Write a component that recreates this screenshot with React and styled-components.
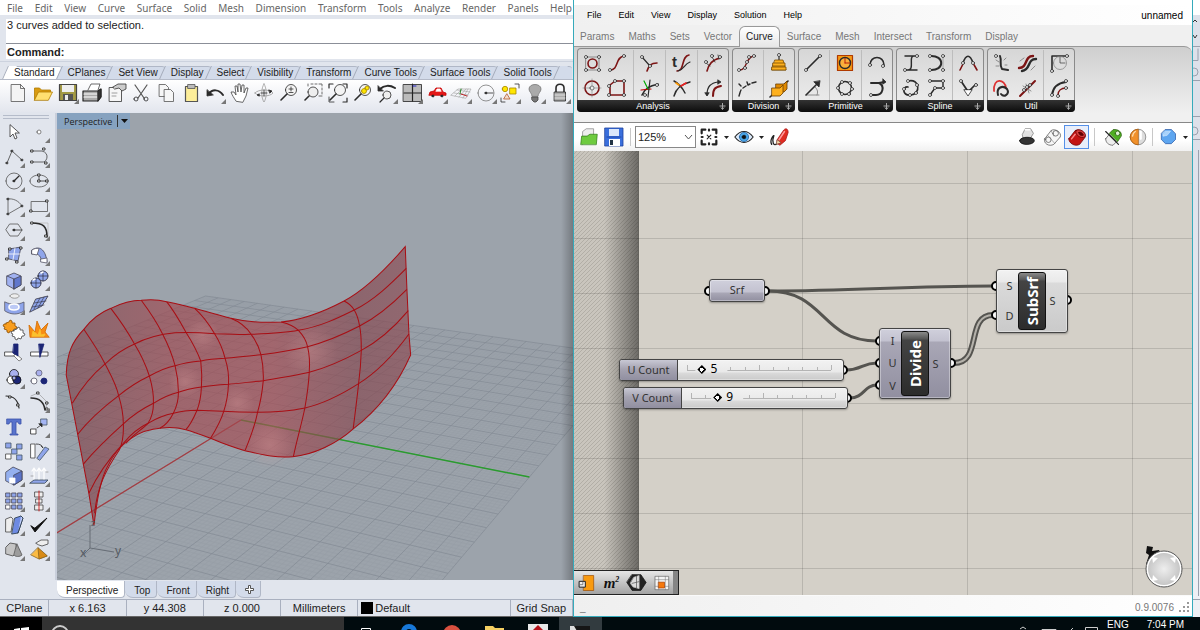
import React, { useState } from 'react'
import styled, { createGlobalStyle, css } from 'styled-components'

const GlobalStyle = createGlobalStyle`
    * { box-sizing: border-box; }
    body {
        margin: 0;
        font-family: "Liberation Sans", Arial, sans-serif;
        font-size: 10px;
        color: #222;
    }
    button {
        border: none;
        background: none;
        padding: 0;
        margin: 0;
        font: inherit;
        color: inherit;
    }
`

const Screen = styled.div`
    height: 100vh;
    display: flex;
    flex-direction: column;
    overflow: hidden;
    background: #e1e5ed;
`
const Desktop = styled.div`
    flex: 1;
    min-height: 0;
    display: grid;
    grid-template-columns: minmax(0, 573fr) minmax(0, 620fr) 7px;
`

/* ---------- Rhino ---------- */

const Rhino = styled.section`
    display: flex;
    flex-direction: column;
    min-width: 0;
    overflow: hidden;
    background: #e1e5ed;
`
const RhinoMenu = styled.nav`
    display: flex;
    flex: none;
    justify-content: space-between;
    height: 15px;
    padding: 0 1px 0 7px;
    background: white;
    font-family: "Noto Sans", sans-serif;
    color: #666;
    white-space: nowrap;
    line-height: 14px;
`
const CommandArea = styled.div`
    flex: none;
    height: 47px;
    padding: 4px 0 3px 6px;
    border-bottom: 1px solid #ccd2de;
    font-size: 11px;
`
const History = styled.div`
    height: 25px;
    padding: 0 1px;
    line-height: 12px;
    background: white;
    border-bottom: 1px solid #8b8f98;
`
const CommandLine = styled.label`
    display: flex;
    align-items: center;
    height: 15px;
    padding-left: 1px;
    line-height: 14px;
    background: white;
    font-weight: bold;
`
const CommandInput = styled.input`
    flex: 1;
    border: none;
    outline: none;
    padding: 0 4px;
    height: 14px;
    background: none;
`
const TabStrip = styled.div`
    display: flex;
    flex: none;
    height: 15px;
    margin-top: 3px;
    padding-left: 8px;
    align-items: flex-end;
    overflow: hidden;
    border-bottom: 1px solid #b4bac8;
`
const ToolTab = styled.button`
    position: relative;
    z-index: 0;
    height: 13px;
    padding: 0 7px 0 6px;
    white-space: nowrap;
    line-height: 12px;
    color: #222;
    background: ${props => props.$active ? 'white' : '#d3dbea'};
    border-top: 1px solid #b0b7c6;
    border-top-right-radius: 3px;
    &::before {
        content: '';
        position: absolute;
        z-index: -1;
        left: -3px;
        top: -1px;
        bottom: 0;
        width: 8px;
        background: inherit;
        border-left: 1px solid #a4abba;
        transform: skewX(-24deg);
    }
`
const StandardBar = styled.div`
    display: grid;
    grid-template-columns: repeat(23, minmax(0, 1fr));
    align-items: center;
    flex: none;
    height: 33px;
    padding: 0 1px 6px 6px;
    background: linear-gradient(white, #e3e6ee);
    border-bottom: 1px solid #e1e5ed;
`
const IconButton = styled.button`
    display: flex;
    align-items: center;
    justify-content: center;
    min-width: 0;
    svg { flex: none; }
`
const RhinoBody = styled.div`
    display: flex;
    flex: 1;
    min-height: 0;
`
const Palette = styled.div`
    flex: none;
    width: 57px;
    padding: 2px 6px 0 1px;
    border-right: 2px solid #c9cfdb;
`
const Gripper = styled.div`
    height: 4px;
    margin: 0 0 1px 2px;
    border-top: 1px solid #b5bcca;
    border-bottom: 1px solid #b5bcca;
`
const PaletteGrid = styled.div`
    display: grid;
    grid-template-columns: 25px 25px;
    grid-template-rows: repeat(18, 1fr);
    height: 442px;
`
const Viewport = styled.div`
    position: relative;
    flex: 1;
    min-width: 0;
    background: #9ca3ab;
    overflow: hidden;
    svg.scene { display: block; width: 100%; height: 100%; }
`
const ViewportTitle = styled.button`
    position: absolute;
    left: 0;
    top: 0;
    display: flex;
    align-items: center;
    gap: 5px;
    height: 16px;
    padding-left: 7px;
    width: 73px;
    background: #86a2bf;
    font-family: "Open Sans", sans-serif;
    font-size: 9px;
    svg { border-left: 1px solid #333; }
`
const ViewTabs = styled.div`
    display: flex;
    flex: none;
    height: 20px;
    padding: 1px 0 0 57px;
    border-bottom: 1px solid #a9b0bf;
`
const ViewTab = styled.button`
    height: 17px;
    padding: 2px 6px 0 9px;
    background: ${props => props.$active ? 'white' : '#d3dbea'};
    border-right: 1px solid #b0b7c6;
    border-bottom: 1px solid #b0b7c6;
    border-radius: 0 0 4px 8px;
`
const StatusBar = styled.div`
    display: flex;
    flex: none;
    height: 17px;
    font-size: 11px;
    line-height: 17px;
    white-space: nowrap;
    border-bottom: 1px solid #666;
`
const StatusCell = styled.div`
    flex: ${props => props.$grow || 77} 1 0;
    min-width: 0;
    display: flex;
    align-items: center;
    gap: 2px;
    justify-content: ${props => props.$left ? 'flex-start' : 'center'};
    padding-left: ${props => props.$left ? '3px' : 0};
    border-right: 1px solid #a9b0bf;
    overflow: hidden;
`
const LayerSwatch = styled.span`
    width: 12px;
    height: 12px;
    background: black;
`

/* ---------- Grasshopper ---------- */

const Grasshopper = styled.section`
    display: flex;
    flex-direction: column;
    min-width: 0;
    border: 1px solid #35aabb;
    border-top: none;
    background: #f0f0f0;
`
const GhMenu = styled.nav`
    display: flex;
    flex: none;
    gap: 17px;
    align-items: center;
    height: 26px;
    padding: 5px 9px 0 13px;
    border-bottom: 1px solid #f0f0f0;
    background: linear-gradient(90deg, #f0f0f0, white) 0 5px no-repeat, white;
    font-size: 9px;
    color: black;
`
const DocumentName = styled.span`
    margin-left: auto;
    font-size: 10px;
`
const GhTabs = styled.div`
    display: flex;
    flex: none;
    height: 21px;
    padding-left: 6px;
    gap: 14px;
    line-height: 20px;
    color: #777;
    position: relative;
    z-index: 1;
`
const GhTab = styled.button`
    height: 21px;
    ${props => props.$active && css`
        margin: 0 -7px;
        padding: 0 6px 3px;
        color: #222;
        background: linear-gradient(white, #e6e6e6);
        border: 1px solid #999;
        border-bottom: none;
        border-radius: 6px 6px 0 0;
    `}
`
const Ribbon = styled.div`
    display: flex;
    flex: none;
    gap: 3px;
    height: 77px;
    margin-top: -1px;
    padding: 1px 3px 11px;
    background: linear-gradient(#cfcfcf, #f0f0f0 88%);
    border-top: 1px solid #999;
    border-bottom: 1px solid #888;
    border-top-right-radius: 8px;
`
const RibbonPanel = styled.div`
    display: flex;
    flex-direction: column;
    height: 64px;
    border-radius: 4px;
    overflow: hidden;
    background: linear-gradient(#d6d6d6, #efefef);
    box-shadow: inset 0 0 0 1px #8a8a8a;
`
const RibbonGroups = styled.div`
    display: flex;
    flex: 1;
    padding-top: 2px;
`
const RibbonGroup = styled.div`
    display: grid;
    grid-template-columns: repeat(${props => props.$cols}, 25px);
    grid-auto-rows: 25px;
    padding: 0 4px 0 2px;
    & + & { border-left: 1px solid #bdbdbd; }
`
const RibbonTitle = styled.button`
    display: grid;
    grid-template-columns: 10px 1fr 10px;
    height: 12px;
    line-height: 12px;
    font-size: 9px;
    color: white;
    background: linear-gradient(#333, #0c0c0c);
`
const GhToolbar = styled.div`
    display: flex;
    flex: none;
    align-items: center;
    height: 28px;
    padding: 0 2px;
    background: linear-gradient(white 60%, #f1f1f1);
`
const ToolButton = styled.button`
    display: flex;
    align-items: center;
    justify-content: center;
    width: ${props => props.$narrow ? '10px' : '25px'};
    height: 24px;
    border: 1px solid ${props => props.$active ? '#5590e8' : 'transparent'};
    background: ${props => props.$active ? '#e8eefa' : 'none'};
    svg { flex: none; }
`
const Divider = styled.span`
    width: 1px;
    height: 18px;
    margin: 0 ${props => props.$gap}px;
    background: #c8c8c8;
`
const ZoomBox = styled.span`
    position: relative;
    display: flex;
    width: 61px;
    height: 22px;
    svg { position: absolute; right: 3px; top: 8px; pointer-events: none; }
`
const ZoomSelect = styled.select`
    appearance: none;
    width: 100%;
    padding: 0 2px;
    border: 1px solid #888;
    border-radius: 0;
    background: white;
    color: #222;
    font-size: 11px;
`
const Spacer = styled.span`
    flex: 1;
`
const Canvas = styled.div`
    position: relative;
    flex: 1;
    min-height: 0;
    overflow: hidden;
    background: #d4d0c8;
`
const Wires = styled.svg`
    position: absolute;
    inset: 0;
`
const NodeBox = styled.div`
    position: absolute;
    left: ${props => props.$x}px;
    top: ${props => props.$y}px;
    width: ${props => props.$w}px;
    height: ${props => props.$h}px;
    display: flex;
    align-items: stretch;
    border: 1px solid #444;
    border-radius: 3px;
    box-shadow: inset 0 0 0 1px rgba(255, 255, 255, .35), 0 1px 2px rgba(0, 0, 0, .3);
    font-family: "Noto Sans", sans-serif;
    font-size: 11px;
    color: #333;
    background: ${props => props.$selected
        ? 'linear-gradient(#d0d0dc 0, #c3c2d0 12px, #a9a7b6 13px, #918fa0)'
        : 'linear-gradient(#f2f2f2 0, #e9e9e9 12px, #dadada 13px, #cacaca)'};
`
const NodeName = styled.span`
    flex: 1;
    text-align: center;
    line-height: 19px;
`
const Params = styled.div`
    flex: none;
    width: 21px;
    display: flex;
    flex-direction: column;
    justify-content: space-around;
    padding: ${props => props.$out ? '0 8px 0 0' : '1px 0 1px 4px'};
    line-height: 14px;
    text-align: center;
`
const NodeTitle = styled.div`
    display: flex;
    align-items: center;
    justify-content: center;
    width: 28px;
    margin: 2px 0;
    border: 1px solid #111;
    border-radius: 3px;
    background: linear-gradient(#8a8a8a, #555 7px, #444 8px, #2c2c2c);
    color: white;
    font-weight: bold;
    font-size: 15px;
    writing-mode: vertical-rl;
    line-height: 18px;
    span { transform: rotate(180deg); }
`
const SliderLabel = styled.label`
    width: 58px;
    line-height: 19px;
    text-align: center;
    border-right: 1px solid #444;
    border-radius: 2px 0 0 2px;
    background: linear-gradient(#c8c8d4, #a5a3b1 45%, #918fa0);
`
const Rail = styled.div`
    position: relative;
    flex: 1;
    padding-left: 9px;
    svg { display: block; }
`
const Range = styled.input`
    appearance: none;
    position: absolute;
    left: 5px;
    top: 5px;
    width: 153px;
    height: 9px;
    margin: 0;
    background: none;
    &::-webkit-slider-thumb {
        appearance: none;
        width: 9px;
        height: 9px;
        background: radial-gradient(circle, white 2px, black 2px);
        clip-path: polygon(50% 0, 100% 50%, 50% 100%, 0 50%);
    }
`
const SliderValue = styled.output`
    position: absolute;
    top: 0;
    line-height: 18px;
    font-size: 12px;
    color: black;
`
const CanvasWidgets = styled.div`
    position: absolute;
    left: 0;
    bottom: 0;
    display: flex;
    align-items: center;
    width: 105px;
    height: 25px;
    border: 1px solid #222;
    border-left: none;
    background: linear-gradient(#e6e6e6, #a3a3a3);
    box-shadow: inset -5px 0 0 #858585;
`
const SquareMetre = styled.span`
    font: italic bold 15px/20px "Liberation Serif", serif;
    color: #111;
    sup { font-size: 8px; line-height: 0; }
`
const Compass = styled.svg`
    position: absolute;
    right: 6px;
    bottom: 1px;
`
const GhStatus = styled.footer`
    display: flex;
    flex: none;
    align-items: center;
    gap: 4px;
    height: 21px;
    padding: 2px 2px 0 6px;
    border-top: 1px solid #fafafa;
    background: linear-gradient(90deg, #efefef, white);
    color: #777;
`

/* ---------- right panel edge and taskbar ---------- */

const PanelEdge = styled.aside`
    overflow: hidden;
    background: linear-gradient(#fff 15px, #dde1ea 15px, #dde1ea 130px, #eef0f5 600px);
    svg { display: block; }
`
const Taskbar = styled.footer`
    display: flex;
    flex: none;
    height: 13px;
    overflow: hidden;
    background: #010b0e;
    color: white;
    svg { flex: none; }
`
const StartButton = styled.button`
    flex: none;
    width: 42px;
    background: black;
`
const Search = styled.button`
    flex: none;
    width: 302px;
    text-align: left;
    background: #333;
`
const Task = styled.button`
    flex: none;
    width: 43px;
    height: 13px;
    background: ${props => props.$active ? '#323b3f' : 'none'};
`
const Tray = styled.div`
    display: flex;
    gap: 18px;
    padding: 3px 16px 0 0;
    line-height: 10px;
`

/* ---------- drawings ---------- */

const K = '#2b2b2b'
const R = '#7d1515'
const B = '#8fa5ea'
const N = '#1b2575'

// an icon is a list of [path, stroke, fill, width] plus round and square handles
const Glyph = ({ icon, size = 24 }) => (
    <svg width={size} height={size} viewBox="0 0 24 24" strokeLinecap="round" strokeLinejoin="round">
        {icon.p.map(([d, stroke = K, fill = 'none', width = 1], i) => (
            <path key={i} d={d} stroke={stroke} fill={fill} strokeWidth={width * 0.8} />
        ))}
        {icon.t && <text x="3" y="16" fontSize="15" fontWeight="bold" fontFamily="Liberation Sans" fill={K}>{icon.t}</text>}
        {(icon.dots || []).map(([x, y], i) => (
            <circle key={i} cx={x} cy={y} r="1.500" fill="white" stroke={K} strokeWidth=".8" />
        ))}
        {(icon.sq || []).map(([x, y], i) => (
            <path key={i} d={`M${x - 1} ${y - 1}h2v2h-2z`} fill="white" stroke={K} strokeWidth=".9" />
        ))}
        {icon.flag && <path d="M23 18v5h-5z" fill="#777" />}
    </svg>
)

const ring = (x, y, r) => `M${x - r} ${y}a${r} ${r} 0 1 0 ${2 * r} 0a${r} ${r} 0 1 0 ${-2 * r} 0z`
const box = (x, y, w, h) => `M${x} ${y}h${w}v${h}h${-w}z`
const magnifier = [[ring(14, 9, 5.5), K, '#f4f4f4'], ['M10 13l-6 6', K, 'none', 2]]

const standardIcons = [
    ['New', { p: [['M5.5 3.5h9l4 4v13h-13z', '#555', '#f4f4f4'], ['M14.5 3.5v4h4', '#555']] }],
    ['Open', { p: [['M3.5 19v-12h5l2 2h9v3', '#b07b00', '#d99b10'], ['M3.5 19l4-8h14l-4 8z', '#b07b00', '#ffe070']] }],
    ['Save', { p: [[box(3.5, 3.5, 17, 16), '#444', '#a39a45', 1.5], [box(6, 4, 12, 7), 'none', '#eee'], [box(7, 13, 10, 6), 'none', '#555'], [box(9, 14, 3, 5), 'none', '#eee']], flag: true }],
    ['Print', { p: [['M8 9l3-6h9l-2 6', '#444', '#fff'], ['M3 10h15l3-2v8l-3 4H3z', '#222', '#aaa', 1.5], ['M4 13h13M4 16h13', '#fff', 'none', 1.5], ['M18 10l3-2v8l-3 4z', '#222', '#333']] }],
    ['Properties', { p: [['M4.5 6.5h12v14h-12z', '#333', '#f6f6f6'], ['M8 6l5-3h8v5l-4 2-3-3-4 1z', '#333', '#ccc'], ['M7 12h5M7 15h4', '#888']] }],
    ['Cut', { p: [['M6 4l9 13M18 4l-9 13', '#555', 'none', 1.5], [ring(7, 18, 2), K], [ring(17, 18, 2), K]] }],
    ['Copy', { p: [['M5.5 3.5h6l3 3v9h-9z', '#555', '#f6f6f6'], ['M10.5 8.5h6l3 3v9h-9z', '#555', '#f6f6f6']] }],
    ['Paste', { p: [['M6.500 5.500h12v15h-12z', '#555', '#fdee9a', 1.5], ['M9 3.500h7v4h-7z', '#555', '#bbb']] }],
    ['Undo', { p: [['M6 13c3-5 10-5 14 1', K, 'none', 2.5], ['M4 9v6l6-1z', K, K]], flag: true }],
    ['Pan', { p: [['M8 20c-2-3-4-6-5-9l3 0 2 3-1-9 2 0 1 6 0-8 2 0 1 8 1-7 2 0 0 8 2-5 2 0-2 8-3 6z', '#444', '#fff']] }],
    ['Rotate view', { p: [['M3 12c3-4 15-4 18 0c-3 4-15 4-18 0z', '#999'], ['M12 3c-3 4-3 14 0 18c3-4 3-14 0-18z', '#999'], ['M9 12h6M12 9v6', K], ['M7 13l-2 1 2 1zM17 9l3 1-2 2z', K, K]] }],
    ['Zoom dynamic', { p: [...magnifier, ['M14 6v4M12 8h4M12 11.500h4', K]] }],
    ['Zoom window', { p: [['M9 3h2M13 3h2M17 3h3v2M20 7v2M20 11v2M20 15h-3M6 3v2', '#666', 'none', 1.2], [ring(11, 11, 5), K, '#eee'], ['M7 15l-4 4', K, 'none', 2]] }],
    ['Zoom extents', { p: [...magnifier, ['M3 7V3h4M17 3h4v4M21 17v4h-4', K, 'none', 1.5], ['M3 16v5h5', K]] }],
    ['Zoom selected', { p: [...magnifier, [ring(13, 10, 2.5), '#a68500', '#ffe600'], [ring(16, 7, 2), '#a68500', '#ffe600']] }],
    ['Undo view', { p: [['M5 8c4-4 10-4 15-1', K, 'none', 2.5], ['M3 5v5l5 0z', K, K], [ring(12, 14, 4), K, '#eee'], ['M9 17l-4 4', K, 'none', 1.5]], flag: true }],
    ['Four views', { p: [[box(3.5, 3.5, 18, 17), '#222', '#bbb'], ['M12.5 3v17M4 12h17', '#222', 'none', 1.5], ['M13 5h3', '#00c']], flag: true }],
    ['Display', { p: [['M4 14l1-3 4-1 2-3h5l2 4 3 1v2z', '#c50000', '#e41818'], ['M11 10l1-2h3l1 2z', '#fff', '#fff'], [ring(8, 15, 1), '#111', '#555'], [ring(17, 15, 1), '#111', '#555']], flag: true }],
    ['CPlane', { p: [['M2 14l7-6h13l-5 9zM6 15l7-7M10 16l7-8M14 17l5-9M5 12l14 2M8 9l13 2', '#999', 'none', .7], ['M12 8l-1 5', '#070'], ['M12 13l6 2', '#b00']], flag: true }],
    ['Osnap', { p: [[ring(12, 12, 8), '#777'], ['M12 12h7', K], [ring(12, 12, 1), K, K]], flag: true }],
    ['Select', { p: [['M17 3h4v4M3 17v4h4', K], [ring(7, 8, 2.7), '#a68500', '#ffe600'], [box(12, 7, 6, 6), '#a68500', '#ffe600'], ['M9 13l3 5H6z', '#b2582a', '#f2dccc']], flag: true }],
    ['Hide', { p: [['M9 15c0-3-3-4-3-7c0-6 12-6 12 0c0 3-3 4-3 7z', '#777', '#aaa'], ['M9 16h6v3l-2 2h-2l-2-2z', '#444', '#777']], flag: true }],
    ['Lock', { p: [['M8 11V7c0-5 8-5 8 0v4', K, 'none', 2], [box(6.5, 11, 11, 9), '#222', '#aaa'], ['M7 14h10M7 17h10', '#eee']], flag: true }],
]

const puzzle = (x, y, c, f) => [`M${x} ${y}l3-1 1-2 2 1 0 2 3 0 0 3 2 1-1 2-2 0-1 3-3-1-1 2-2-1 0-2-3-1 1-2-2-1 1-2 2 0z`, c, f]
const paletteIcons = [
    ['Select', { p: [['M8 5v12l3-3 2 5 2-1-2-5h4z', '#333', '#fff']] }],
    ['Point', { p: [[ring(12, 12, 2), '#666', '#fff']], flag: true }],
    ['Polyline', { p: [['M5 18l5-12 10 9', '#444'], [ring(5, 18, 1), K, '#777'], [ring(10, 6, 1), K, '#777'], [ring(20, 15, 1), K, '#777']], flag: true }],
    ['Curve', { p: [['M5 6h10c8 2 5 11 1 11H5', '#444']], sq: [[5, 6], [17, 4], [5, 17], [19, 18]], flag: true }],
    ['Circle', { p: [[ring(12, 12, 8), '#555'], ['M12 12l5-5', K, 'none', 1.5], [ring(12, 12, 1), K, K]], flag: true }],
    ['Ellipse', { p: [['M3 12c0-8 18-8 18 0c0 8-18 8-18 0z', '#555'], ['M12 12V7M12 12h7', K]], sq: [[12, 12], [12, 6], [20, 12]], flag: true }],
    ['Arc', { p: [['M6 5v15l14-8c-3-5-9-8-14-7', '#555'], [ring(6, 5, 1), K, '#777'], [ring(6, 20, 1), K, '#777'], [ring(20, 12, 1), K, '#777']], flag: true }],
    ['Rectangle', { p: [[box(4.5, 7.5, 16, 10), '#555']], sq: [[4, 17], [20, 7]], flag: true }],
    ['Polygon', { p: [['M8 6h8l4 6-4 6H8l-4-6z', '#555'], ['M12 12h8', K], [ring(12, 12, 1), K, K]], flag: true }],
    ['Fillet', { p: [['M5 5h16v14', '#bbb'], ['M5 5c11 0 15 3 15 14', K, 'none', 2]], sq: [[5, 5], [19, 18]], flag: true }],
    ['Surface from points', { p: [['M7 6l12-2-3 14-9-2z', '#445', B], ['M13 5l-2 12M6 11l12 0', '#fff']], sq: [[8, 6], [19, 5], [5, 16], [15, 19]], flag: true }],
    ['Sweep', { p: [['M5 7c9-6 14 2 15 12l-6-2c0-4-3-7-9-6z', '#445', B], ['M5 7c3-2 5-2 7-1l-2 6-5-1zM14 16l6-1 0 5-6-1z', '#556', '#fff']], flag: true }],
    ['Box', { p: [['M5 8l7-3 7 3v9l-7 4-7-4z', '#445', '#a0b1f0'], ['M12 11l7-3v9l-7 4z', '#445', '#6077cc'], ['M5 8l7 3v10', '#445']], flag: true }],
    ['Spheres', { p: [[ring(16, 8, 5), '#223', B], [ring(9, 15, 5), '#223', B], ['M4 15h10M9 10v10M11 8h10M16 3v10', '#223', 'none', .8], ['M6 12l2-1M14 5l2-1', '#fff', 'none', 2]], flag: true }],
    ['Project', { p: [['M8 4c0-3 9-3 9 0s-9 3-9 0z', '#888', '#eee'], ['M3 10c6 3 13 3 19 0v9c-6 4-13 4-19 0z', '#556', B], ['M7 15c0-4 10-4 10 0s-10 4-10 0z', '#fff', '#bcc9f5', 2]], flag: true }],
    ['Mesh', { p: [['M9 7l12-3-6 10-12 6z', '#334', B], ['M13 6l-6 11M17 5l-6 11M7 11l12-2M5 15l12-2', '#334', 'none', .8]], flag: true }],
    ['Join', { p: [puzzle(4, 6, '#8a4c00', '#f99e1e'), puzzle(12, 13, '#444', '#fff')] }],
    ['Explode', { p: [['M3 20l-1-12 6 7 2-11 4 9 7-7-3 9 4 5z', '#d06a00', '#f78c14'], ['M5 19l1-5 5 4 2-6 1 6 4-1-1 2z', '#fbc22e', '#fbc22e']] }],
    ['Trim', { p: [['M3 11h8l3 4-11 0z', '#333', '#fff'], ['M14 13l6 5-3 2-5-5z', '#666', '#fff'], ['M12 3h4v12l-5-3z', N, N]] }],
    ['Split', { p: [['M4 11h17v4H4z', '#333', '#fff'], ['M12 3h5l-4 13z', N, N]] }],
    ['Boolean', { p: [[ring(12, 8, 4.5), '#111', '#a9b0ee'], [ring(9, 14, 4), '#111', '#fff'], [ring(15, 14, 4), '#111', N], [ring(12, 12, 2), '#111', '#a9b0ee']], flag: true }],
    ['Group', { p: [[ring(12, 7, 3), '#667', '#a9b0ee'], [ring(7, 15, 3), '#556', '#fff'], [ring(17, 15, 3), N, N]] }],
    ['Edit points', { p: [['M4 6c8 0 12 4 13 12', K, 'none', 1.5]], sq: [[8, 7], [16, 15]] }],
    ['Control points', { p: [['M4 8c8 0 13 4 14 12', K, 'none', 2], ['M4 6l7-3 9 9-1 7', '#888', 'none', .7]], sq: [[11, 3], [20, 13], [20, 19]], flag: true }],
    ['Text', { p: [['M5 4h14v5h-2l-1-2h-2v12l2 0v1H8v-1l2 0V7H8L7 9H5z', '#3a52a8', '#5873cc']] }],
    ['Move', { p: [[box(4, 14, 5, 5), K, '#fff'], [box(14, 4, 6, 6), '#456', '#a4b5f3'], ['M10 13l4-3', K], ['M15 9v3l-3-3z', K, K]], flag: true }],
    ['Copy', { p: [[box(4, 4, 5, 5), '#456', B], [box(10, 10, 5, 5), '#456', B], [box(15, 5, 5, 5), '#456', B], [box(4, 15, 5, 5), '#444', '#fff'], [box(15, 16, 5, 5), '#456', B]] }],
    ['Rotate', { p: [[box(4, 5, 4, 14), '#444', '#fff'], ['M10 19l8-11 4 2-9 11z', '#456', B], ['M9 5c4 0 6 1 7 4l-2-2', K]] }],
    ['Scale', { p: [['M4 8l7-5 9 4v9l-8 5-8-4z', '#445', '#94b0ef'], ['M12 11l8-4v9l-8 5z', '#445', '#5a73c8'], [box(8, 14, 5, 5), '#fff', '#fff']], flag: true }],
    ['Extrude', { p: [['M3 19l4-3h14l-3 3z', '#345', B], ['M7 15V5M12 15V5M17 15V5M5 7l2-3 2 3M10 7l2-3 2 3M15 7l2-3 2 3', '#fff', 'none', 1.5], ['M4 12h2M19 8h2', '#999']], flag: true }],
    ['Array', { p: [...[4, 10, 16].flatMap(x => [4, 10, 16].map(y => [box(x, y, 4, 4), '#445', y === 16 && x === 4 ? '#fff' : B]))], flag: true }],
    ['Align', { p: [[box(8, 3, 8, 5), '#444', '#eee'], [box(9, 10, 6, 4), '#444', '#eee'], [box(8, 16, 8, 5), '#444', '#eee'], ['M12 2v20', '#c00']], flag: true }],
    ['Mirror', { p: [['M4 6l5-2 2 2-2 13-5 0z', '#444', '#eee'], ['M13 5l6-2 2 2-5 15-6 1z', '#234', '#6d8ae2'], ['M19 3l2 2-5 15', '#234', '#bfcdfa']], flag: true }],
    ['Check', { p: [['M4 13l4 6L20 5 8 15z', '#111', '#111', 1.2]], flag: true }],
    ['Solid tools', { p: [['M4 9l4-4 6 1 1 8-4 4-7-2z', '#444', '#c4c4c4'], ['M15 6l5 11c-2 2-7 2-8 0z', '#555', '#9c9c9c']], flag: true }],
    ['Analyse', { p: [['M11 10l9 8-8 3-8-4z', '#8b6620', '#fbbb43'], ['M11 10l1 11 8-3z', '#8b6620', '#d98a14'], ['M9 5l5-3h7v4l-6 2-3-1z', '#444', '#eee']], flag: true }],
]

const ribbonPanels = [
    { title: 'Analysis', groups: [
        [
            { p: [[box(6, 6, 13, 13), '#777'], [ring(12.5, 12.5, 4.5), R, 'none', 2]], dots: [[6, 6], [19, 6], [6, 19], [19, 19]] },
            { p: [['M5 19c9 0 5-13 14-14', R, 'none', 2]], dots: [[5, 19], [19, 5]] },
            { p: [[ring(12, 12, 7), R, 'none', 2], ['M3 12h18M12 3v18', '#777', 'none', .7], [ring(12, 12, 2), K, '#eee', .7]] },
            { p: [['M5 9l5-4h9v14H5z', R, 'none', 2]], dots: [[4, 10], [10, 5], [19, 5], [4, 19], [19, 19]] },
        ],
        [
            { p: [['M5 6l8 9', K, 'none', 1.5], ['M10 20c2-6 4-8 10-8', R, 'none', 2]], dots: [[5, 6], [13, 15]] },
            { p: [['M5 19c3-7 8-9 16-11', K, 'none', 2], ['M4 14l10-1', '#b00', 'none', 1.5], ['M7 5l4 8', '#0a0', 'none', 1.5], ['M13 4l-2 17', K, 'none', 1.500]], dots: [[8, 19], [20, 9]] },
        ],
        [
            { p: [['M8 20c8 0 4-15 12-16', R, 'none', 2], ['M9 20c6-1 6-7 12-9', K, 'none', 1.5]], t: 't' },
            { p: [['M5 20c2-7 7-12 16-14', K, 'none', 1.8], ['M5 5c4 2 8 6 11 12', K, 'none', 1.8], ['M12 10l5-3', '#e22', 'none', 2], ['M7 7l3 2', '#f90', 'none', 2]] },
        ],
        [
            { p: [['M6 20c2-7 5-11 13-13', R, 'none', 2], ['M5 12l4 3M11 6l3 5M17 4l1 4', K]], dots: [[5, 11], [11, 5], [19, 6]] },
            { p: [['M12 20c0-7 2-9 8-10', R, 'none', 2.5], ['M6 19c0-9 4-12 11-13', K, 'none', 1.5], ['M4 17l2 3 2-3zM17 4l3 2-3 2z', K, K]] },
        ],
    ] },
    { title: 'Division', groups: [
        [
            { p: [['M4 19c9 0 6-13 15-14', R, 'none', 1.8]], dots: [[4, 19], [10, 17], [12, 11], [14, 6], [19, 5]] },
            { p: [['M4 20c1-3 1-4 2-6M8 12l3-2M13 9l2-1M17 7l4-1M6 10l-2-2M12 6l1 3', K, 'none', 1.8]] },
        ],
        [
            { p: [['M12 3v8', K, 'none', 1.5], ['M8 9h8l3 10H5z', '#7a4b00', '#fdb01e'], ['M6 12h12v3H6zM5 16h14v3H5z', '#7a4b00', '#fdb01e']], dots: [[12, 4]] },
            { p: [['M3 21L21 5', K, 'none', 2], ['M9 8h8l3-3v8l-3 3H9z', '#6b3d00', '#e08a00'], ['M5 12h8l3-3v8l-3 3H5z', '#6b3d00', '#fdb01e']] },
        ],
    ] },
    { title: 'Primitive', groups: [
        [
            { p: [['M5 19L19 5', K, 'none', 2]], dots: [[5, 19], [19, 5]] },
            { p: [['M5 19h13M14 11c3 3 3 5 2 8', '#777'], ['M5 19L17 7', K, 'none', 2], ['M19 5l-1 6-5-5z', K, K]] },
        ],
        [
            { p: [[box(4.5, 4.5, 15, 15), '#b03a00', '#f59a14', 1.500], [ring(12, 12, 5.5), K, '#fbaf3b', 1.8], ['M12 12V7M12 12h5', '#a00']] },
            { p: [[ring(12, 12, 6.5), K, 'none', 2]], dots: [[5, 12], [9, 6], [17, 7], [19, 13], [9, 18], [16, 18]] },
        ],
        [
            { p: [['M5 14c0-10 14-10 14 0', K, 'none', 2]], dots: [[5, 14], [18, 15]] },
            { p: [['M6 7h8l5-1M14 7c6 3 4 12-3 12H6', K, 'none', 2.5], ['M18 3l3 3-3 2z', K, K]], dots: [[6, 19]] },
        ],
    ] },
    { title: 'Spline', groups: [
        [
            { p: [['M6 5h11M7 19h11M15 5c-6 0 1 14-6 14', K, 'none', 1.8]], dots: [[18, 5], [6, 19]] },
            { p: [['M6 5c15-1 15 15 0 14', K, 'none', 2.5], ['M19 5v14', '#888', 'none', .8]], dots: [[6, 5], [19, 5], [19, 19], [6, 19]] },
            { p: [['M9 5c12-3 13 13 3 14c-9 1-9-9-3-8', K, 'none', 2]], dots: [[9, 5], [18, 9], [17, 17], [5, 13], [11, 19]] },
            { p: [['M6 5h13v7h-8L6 19', K, 'none', 1.8]], dots: [[6, 5], [19, 5], [19, 12], [11, 12], [6, 19]] },
        ],
        [
            { p: [['M4 19l3-6M17 12l4 7', R, 'none', 2], ['M7 12c3-9 7-9 10 0', K, 'none', 2]], dots: [[7, 12], [17, 12]] },
            { p: [['M5 5l6 9M20 8l-7 7', K, 'none', 2.2], ['M8 14l4 6 4-6z', K, '#fff']], dots: [[5, 5], [20, 9]] },
        ],
    ] },
    { title: 'Util', groups: [
        [
            { p: [['M10 5c2 5-1 8 2 13l6 1', K, 'none', 2.5], ['M6 9l3 2M6 15l3 0', '#777'], ['M14 9l2-2M15 14h2', '#777']], dots: [[6, 5]] },
            { p: [['M4 17c9 0 5-12 14-12', R, 'none', 3], ['M7 20c9-1 5-12 14-12', K, 'none', 3], ['M5 10l4-3M16 19l4-4', '#777']] },
            { p: [['M4 15c-1-14 11-12 12-3', '#d33', 'none', 2.2], ['M8 19c-2-8 5-10 9-6c3 5-3 9-6 5', K, 'none', 2.500]] },
            { p: [['M5 20L20 5', R, 'none', 2.5], ['M8 10l8 5M11 8l3 9', '#777']], dots: [[9, 14], [12, 11], [15, 9]] },
        ],
        [
            { p: [['M5 19V5h14', K, 'none', 2], [ring(13, 12, 6.5), '#888'], ['M13 6v6h5', K, 'none', .8]], dots: [[20, 5], [5, 20]] },
            { p: [['M5 19c1-8 5-12 14-13', K, 'none', 2.5], ['M11 19c0-4 3-7 8-7', R, 'none', 2]], dots: [[5, 19], [19, 5], [11, 20], [19, 12]] },
        ],
    ] },
]

const ghIcons = {
    open: { p: [['M5 20V6l4-3h8v8', '#888', '#eee'], ['M3 20l1-9h6l3-2h8l-1 11z', '#2e7d14', '#6ecb3f']] },
    save: { p: [[box(3, 3, 18, 18), '#1c3f9c', '#3a6fdc'], [box(7, 4, 10, 7), 'none', '#dce8fb'], [box(7, 14, 11, 7), 'none', '#fff'], [box(8, 15, 3, 5), 'none', '#234'], ['M5 12h14', '#1c3f9c']] },
    focus: { p: [['M4 8V4h4M16 4h4v4M20 16v4h-4M8 20H4v-4M12 4v1M12 19v1M4 12h1M19 12h1', '#222', 'none', 3], ['M10 10l4 4M14 10l-4 4', '#222', 'none', 1.5]] },
    eye: { p: [['M2 12c6-8 14-8 20 0c-6 8-14 8-20 0z', '#222', '#dceafa', 1.5], [ring(12, 12, 5), '#175c9c', '#4aa6e8'], [ring(12, 12, 2), '#111', '#111']] },
    sketch: { p: [['M4 20c-3-5 4-13 2-8s0 11 4 7', '#222', 'none', 1.8], ['M10 15l6-9c3-5 6-3 6 1l-3 9-6 5-3-2z', '#a31414', '#e02c22'], ['M12 15l6-9', '#f99', 'none', 2], ['M9 20l1-5 4 3z', '#754', '#f7d7a8']] },
    noPreview: { p: [['M7 9l3-6h6l3 5-3 5H8z', '#777', '#e2e2e2'], ['M10 4h5', '#fff', 'none', 2], ['M4 16c0-5 16-5 16 0s-16 6-16 0z', '#111', '#333']] },
    wire: { p: [['M4 14l7-9c4-3 12 2 10 7l-7 8c-5 3-12-1-10-6z', '#555', '#f7f7f7'], [ring(16, 8, 3), '#555'], [ring(8, 15, 3), '#555'], ['M7 10l8 9M11 5l3 6', '#777', 'none', .8]] },
    shaded: { p: [['M3 14l7-9c5-3 12 2 11 7l-6 8c-5 3-12-1-12-6z', '#6e0000', '#c31414'], ['M11 5c4-3 11 2 10 6c-2 4-12 0-10-6z', '#6e0000', '#d84040'], ['M14 7c1-1 4 0 5 3c-2 1-5 0-5-3z', '#500', '#600'], ['M6 14l4-5', '#f88', 'none', 2]] },
    selected: { p: [['M4 14l4-5 8 8-4 4c-5 0-8-3-8-7z', '#555', '#eee'], ['M8 8l4-4c6-1 10 3 9 7l-4 6z', '#265c0c', '#4fae22'], [ring(17, 8, 2.5), '#265c0c', '#dff3d2'], ['M4 6l14 14', '#222', 'none', 1.5]] },
    quality: { p: [[ring(12, 12, 8.5), '#777', '#ddd'], ['M12 3.500a8.500 8.500 0 0 0 0 17z', '#a85500', '#f0902a'], ['M9 6a7 7 0 0 0-3 5', '#ffd9a8', 'none', 2], ['M15 6v8', '#fff', 'none', 3]] },
    display: { p: [['M9 3h7l5 5v7l-5 5H9l-5-5V8z', '#1c4e9e', '#5ea6f0'], ['M9 5h6l-4 5-5 1V8z', '#cfe6ff', '#a9d3fb']] },
    page: { p: [[box(8, 3, 12, 18), '#9a4a00', '#f89a10'], [box(3, 10, 7, 7), '#222', '#eee', 1.5], ['M7 11v3H4', '#555']] },
    hex: { p: [['M7 3h10l6 9-6 9H7l-6-9z', '#111', '#222'], ['M9 6l6-2v15l-7-2-3-4z', '#bbb', '#ddd'], ['M7 13l8-2M12 5v13', '#555']] },
    gridPage: { p: [[box(4, 4, 16, 16), '#666', '#f4f4f4'], ['M8 4v16M16 4v16M4 8h16M4 16h16', '#777', 'none', .8], [box(8, 11, 7, 7), '#a03a00', '#f5780c']] },
}

const Caret = () => (
    <svg width="5" height="3"><path d="M0 0h5L2.500 3z" fill="#222" /></svg>
)

/* ground plane of the perspective view, in a -1..1 square */
const project = (x, y) => {
    const w = 1 - 0.2922 * x - 0.1192 * y
    return `${((241 - 274.3 * x + 225.3 * y) / w).toFixed(1)} ${((420 + 2.1 * x + 0.14 * y) / w).toFixed(1)}`
}
const planeLines = wanted => {
    let d = ''
    for (let i = -70; i <= 70; i++) {
        if ((i % 5 === 0) !== wanted) continue
        const t = i / 70
        d += `M${project(t, -1)}L${project(t, 1)}M${project(-1, t)}L${project(1, t)}`
    }
    return d
}

const outline = 'M48 435C50 370 65 335 100 298C125 265 150 247 180 235C215 218 245 211 270 211C300 207 330 211 345 215C375 220 400 228 428 235C470 247 500 256 535 265C580 276 630 279 684 276C750 270 810 245 870 213C940 175 1000 110 1051 50L1056 178L1062 312L1067 375C1030 460 970 540 897 597C850 640 780 675 718 680C670 686 620 672 577 662C540 652 510 640 475 625C450 615 425 605 402 599C380 593 350 592 330 594C290 597 265 607 240 625C210 645 185 675 165 720C145 765 137 830 130 886L115 790L82 613Z'
const isoCurves = [
    'M66 520C95 470 130 430 163 402C190 375 220 355 250 342C290 320 330 312 370 308C410 306 450 308 490 311C540 313 570 314 595 313C650 311 700 308 735 301C800 290 850 265 900 240C960 210 1010 160 1054 115',
    'M82 613C115 570 160 530 203 497C235 470 265 452 294 438C320 423 345 412 370 407C400 398 425 395 446 393C470 388 500 386 518 385C555 381 590 378 624 374C670 368 720 360 762 350C820 335 870 312 916 288C970 260 1015 220 1056 178',
    'M98 703C130 665 175 620 217 582C250 550 280 533 306 520C330 505 355 493 380 487C405 477 425 474 448 471C475 467 500 465 528 463C560 460 600 455 631 452C680 444 730 436 767 427C820 412 870 390 921 361C970 335 1020 290 1060 242',
    'M115 790C140 735 180 680 217 640C240 612 265 592 290 580C315 565 340 555 365 550C390 543 415 541 435 541C460 542 485 543 510 544C545 546 580 547 614 547C665 547 710 543 754 534C815 520 865 492 913 461C970 425 1020 370 1062 312',
    'M100 298C125 335 147 370 163 402C180 435 197 465 203 497C213 530 217 560 217 582C218 610 215 640 205 660C165 720 140 770 132 850',
    'M180 235C205 268 230 305 250 342C270 375 285 410 294 438C303 470 307 500 306 520C306 548 300 565 290 580C270 600 245 615 225 640',
    'M270 211C295 245 315 275 333 312C350 345 363 380 370 407C377 435 380 460 380 487C380 510 375 530 365 550C355 570 345 585 325 595',
    'M345 215C365 240 385 275 403 308C420 335 436 365 446 393C449 420 450 445 448 471C447 495 443 520 435 541C425 565 415 585 402 599',
    'M428 235C450 255 472 285 487 311C502 335 512 360 518 385C526 410 530 435 528 463C527 490 522 520 514 544C505 575 490 600 475 625',
    'M535 265C560 275 580 290 595 313C608 330 618 350 624 374C630 400 632 425 631 452C628 485 622 520 614 547C606 590 590 630 577 662',
    'M684 276C705 281 722 288 735 301C748 315 758 330 762 350C768 375 769 400 767 427C765 465 760 500 754 534C745 580 730 630 720 680',
    'M870 213C885 220 893 228 900 240C908 253 913 270 916 288C921 310 921 335 921 361C920 395 917 430 913 461C908 510 902 555 897 597',
]
const highlights = [[450, 315, 50], [400, 455, 50], [555, 520, 50], [770, 365, 80], [650, 645, 70]]

const Scene = () => (
    <svg className="scene" viewBox="57 113 516 467" preserveAspectRatio="xMinYMin slice">
        <defs>
            <linearGradient id="skin">
                <stop offset="0" stopColor="#7d464d" />
                <stop offset=".3" stopColor="#a0474e" />
                <stop offset=".6" stopColor="#a6484f" />
                <stop offset=".85" stopColor="#84454d" />
                <stop offset="1" stopColor="#8c4850" />
            </linearGradient>
            <radialGradient id="shine">
                <stop offset="0" stopColor="#dca0a0" stopOpacity=".3" />
                <stop offset="1" stopColor="#dca0a0" stopOpacity="0" />
            </radialGradient>
            <linearGradient id="edge">
                <stop offset="0" stopColor="#000" stopOpacity="0" />
                <stop offset="1" stopColor="#000" stopOpacity=".25" />
            </linearGradient>
        </defs>
        <path d={planeLines(false)} stroke="#8b929b" strokeWidth=".3" opacity=".5" />
        <path d={planeLines(true)} stroke="#828993" strokeWidth=".7" />
        <path d={`M${project(0, 0)}L${project(1, 0)}`} stroke="#a43d42" strokeWidth="1.300" />
        <path d={`M${project(0, 0)}L${project(0, 1)}`} stroke="#2a9c2e" strokeWidth="1.500" />
        <g transform="translate(50 230) scale(.338 .3333)" fill="none" stroke="#a80e14" strokeWidth="3">
            <path d={outline} fill="url(#skin)" fillOpacity=".65" stroke="none" />
            {highlights.map(([x, y, r]) => <circle key={x} cx={x} cy={y} r={r} fill="url(#shine)" stroke="none" />)}
            {isoCurves.map(d => <path key={d} d={d} />)}
            <path d={outline} />
        </g>
        <path d="M90 525v23l24 4M90 548l-6 6" stroke="#666c75" fill="none" />
        <g fontFamily="Noto Sans" fontSize="12" fill="#555a62">
            <text x="80" y="557">x</text>
            <text x="115" y="555">y</text>
            <text x="91" y="526" fontSize="9">z</text>
        </g>
        <rect x="561" y="113" width="12" height="467" fill="url(#edge)" />
    </svg>
)

const toolTabs = ['Standard', 'CPlanes', 'Set View', 'Display', 'Select', 'Visibility', 'Transform', 'Curve Tools', 'Surface Tools', 'Solid Tools', '']
const rhinoMenus = ['File', 'Edit', 'View', 'Curve', 'Surface', 'Solid', 'Mesh', 'Dimension', 'Transform', 'Tools', 'Analyze', 'Render', 'Panels', 'Help']

const RhinoWindow = () => (
    <Rhino>
        <RhinoMenu>{rhinoMenus.map(m => <button key={m}>{m}</button>)}</RhinoMenu>
        <CommandArea>
            <History>3 curves added to selection.</History>
            <CommandLine>Command:<CommandInput /></CommandLine>
        </CommandArea>
        <TabStrip>
            {toolTabs.map((t, i) => <ToolTab key={t} $active={i === 0}>{t}</ToolTab>)}
        </TabStrip>
        <StandardBar>
            {standardIcons.map(([name, icon]) => (
                <IconButton key={name} aria-label={name}><Glyph icon={icon} /></IconButton>
            ))}
        </StandardBar>
        <RhinoBody>
            <Palette>
                <Gripper />
                <PaletteGrid>
                    {paletteIcons.map(([name, icon]) => (
                        <IconButton key={name} aria-label={name}><Glyph icon={icon} /></IconButton>
                    ))}
                </PaletteGrid>
            </Palette>
            <Viewport>
                <Scene />
                <ViewportTitle>
                    Perspective
                    <svg width="12" height="12"><path d="M3 4h7l-3.500 4z" fill="#111" /></svg>
                </ViewportTitle>
            </Viewport>
        </RhinoBody>
        <ViewTabs>
            <ViewTab $active>Perspective</ViewTab>
            <ViewTab>Top</ViewTab>
            <ViewTab>Front</ViewTab>
            <ViewTab>Right</ViewTab>
            <ViewTab aria-label="Add view">
                <svg width="9" height="9"><path d="M3.500 .5h2v3h3v2h-3v3h-2v-3h-3v-2h3z" fill="white" stroke="#555" /></svg>
            </ViewTab>
        </ViewTabs>
        <StatusBar>
            <StatusCell $grow={49}>CPlane</StatusCell>
            <StatusCell>x 6.163</StatusCell>
            <StatusCell>y 44.308</StatusCell>
            <StatusCell>z 0.000</StatusCell>
            <StatusCell>Millimeters</StatusCell>
            <StatusCell $grow={150} $left><LayerSwatch />Default</StatusCell>
            <StatusCell $grow={62}>Grid Snap</StatusCell>
        </StatusBar>
    </Rhino>
)

const Slider = ({ id, label, x, y, min, max, start }) => {
    const [value, setValue] = useState(start)
    const knob = 10 + 144 * (value - min) / (max - min)
    return (
        <NodeBox $x={x} $y={y} $w={225} $h={22}>
            <SliderLabel htmlFor={id}>{label}</SliderLabel>
            <Rail>
                <svg width="146" height="20" stroke="#b4b4b4">
                    <path d={`M0 10.500H${knob - 16}M${knob + 16} 10.500H144`} />
                    {[0, 1, 2, 3, 4, 5, 6, 7, 8, 9, 10].filter(i => Math.abs(i * 14.4 + 8 - knob - 5) > 14).map(i => (
                        <path key={i} d={`M${Math.round(i * 14.4) + .5} ${i % 5 ? 7 : 5}V10`} />
                    ))}
                </svg>
                <Range id={id} type="range" min={min} max={max} value={value} onChange={e => setValue(+e.target.value)} />
                <SliderValue style={{ left: knob + 8 }}>{value}</SliderValue>
            </Rail>
        </NodeBox>
    )
}

const grips = [[709, 291], [765, 291], [843, 370], [847, 398], [880, 341], [880, 363], [880, 385], [951, 363], [996, 286], [996, 315], [1067, 300]]

const GhCanvas = () => (
    <Canvas>
        <Wires width="100%" height="100%">
            <defs>
                <linearGradient id="shade">
                    <stop offset="0" stopColor="#000" stopOpacity="0" />
                    <stop offset="1" stopColor="#000" stopOpacity=".45" />
                </linearGradient>
                <pattern id="hatch" width="4" height="4" patternUnits="userSpaceOnUse">
                    <path d="M0 4L4 0" stroke="#b2aea6" strokeWidth="1" />
                </pattern>
            </defs>
            <g transform="translate(-574 -151)">
                <rect x="574" y="151" width="64" height="450" fill="#c9c5bd" />
                <rect x="574" y="151" width="64" height="450" fill="url(#hatch)" />
                <rect x="604" y="151" width="34" height="450" fill="url(#shade)" />
                <path d="M638.500 151v450" stroke="#66645f" />
                <path d="M802.500 151v450M967.500 151v450M1132.500 151v450M574 183.500h1400M574 238.500h1400M574 293.500h1400M574 348.500h1400M574 403.500h1400M574 458.500h1400M574 513.500h1400M574 568.500h1400" stroke="#000" strokeOpacity=".13" />
                <g fill="none" stroke="#555450" strokeWidth="3">
                    <path d="M768 291C860 291 900 286 993 286" />
                    <path d="M768 291C826 291 820 341 877 341" />
                    <path d="M846 370C862 370 862 363 877 363" />
                    <path d="M850 398C864 398 864 385 877 385" />
                    <path d="M954 363C983 363 965 315 993 315" strokeWidth="6" />
                    <path d="M954 363C983 363 965 315 993 315" stroke="#b5b2ab" strokeWidth="2" />
                </g>
                {grips.map(([x, y]) => (
                    <circle key={`${x}-${y}`} cx={x} cy={y} r="4" fill="white" stroke="black" strokeWidth="2" />
                ))}
            </g>
        </Wires>
        <NodeBox $x={135} $y={128} $w={56} $h={23} $selected><NodeName>Srf</NodeName></NodeBox>
        <Slider id="u-count" label="U Count" x={45} y={208} min={4} max={14} start={5} />
        <Slider id="v-count" label="V Count" x={49} y={236} min={5} max={27} start={9} />
        <NodeBox $x={305} $y={177} $w={72} $h={71} $selected>
            <Params><span>I</span><span>U</span><span>V</span></Params>
            <NodeTitle><span>Divide</span></NodeTitle>
            <Params $out><span>S</span></Params>
        </NodeBox>
        <NodeBox $x={422} $y={118} $w={72} $h={64}>
            <Params><span>S</span><span>D</span></Params>
            <NodeTitle><span>SubSrf</span></NodeTitle>
            <Params $out><span>S</span></Params>
        </NodeBox>
        <CanvasWidgets>
            <ToolButton aria-label="Profiler"><Glyph icon={ghIcons.page} size={20} /></ToolButton>
            <ToolButton><SquareMetre>m<sup>2</sup></SquareMetre></ToolButton>
            <ToolButton aria-label="Mesh quality"><Glyph icon={ghIcons.hex} size={21} /></ToolButton>
            <ToolButton aria-label="Align"><Glyph icon={ghIcons.gridPage} size={20} /></ToolButton>
        </CanvasWidgets>
        <Compass width="44" height="50" viewBox="0 0 44 50">
            <radialGradient id="dial"><stop offset="0" stopColor="#eee" /><stop offset="1" stopColor="#c4c4c4" /></radialGradient>
            <path d="M5 2l6 1-1 4 7-1 2 4-13 11-2-1 3-9-3-2z" fill="#111" />
            <circle cx="22" cy="25" r="17" fill="url(#dial)" stroke="white" strokeWidth="2" />
            <circle cx="22" cy="25" r="18" fill="none" stroke="#555" />
            <path d="M10 13l6 1-5 5zM34 13l-6 1 5 5zM10 37l6-1-5-5zM34 37l-6-1 5-5z" fill="white" />
        </Compass>
    </Canvas>
)

const ghTabs = ['Params', 'Maths', 'Sets', 'Vector', 'Curve', 'Surface', 'Mesh', 'Intersect', 'Transform', 'Display']

const GrasshopperWindow = () => (
    <Grasshopper>
        <GhMenu>
            {['File', 'Edit', 'View', 'Display', 'Solution', 'Help'].map(m => <button key={m}>{m}</button>)}
            <DocumentName>unnamed</DocumentName>
        </GhMenu>
        <GhTabs>{ghTabs.map(t => <GhTab key={t} $active={t === 'Curve'}>{t}</GhTab>)}</GhTabs>
        <Ribbon>
            {ribbonPanels.map(({ title, groups }) => (
                <RibbonPanel key={title}>
                    <RibbonGroups>
                        {groups.map((icons, g) => (
                            <RibbonGroup key={g} $cols={icons.length / 2}>
                                {icons.map((icon, i) => (
                                    <IconButton key={i} aria-label={`${title} ${g + 1}.${i + 1}`}><Glyph icon={icon} /></IconButton>
                                ))}
                            </RibbonGroup>
                        ))}
                    </RibbonGroups>
                    <RibbonTitle>
                        <span />
                        <span>{title}</span>
                        <svg width="7" height="12"><path d="M3.500 3v6M.5 6h6M2 7.500l1.500 2L5 7.500" stroke="#aaa" fill="none" /></svg>
                    </RibbonTitle>
                </RibbonPanel>
            ))}
        </Ribbon>
        <GhToolbar>
            <ToolButton aria-label="Open"><Glyph icon={ghIcons.open} size={22} /></ToolButton>
            <ToolButton aria-label="Save"><Glyph icon={ghIcons.save} size={24} /></ToolButton>
            <Divider $gap={4} />
            <ZoomBox>
                <ZoomSelect aria-label="Zoom" defaultValue="125%">
                    <option>100%</option>
                    <option>125%</option>
                    <option>150%</option>
                </ZoomSelect>
                <svg width="9" height="7"><path d="M1 1l3.500 4L8 1" fill="none" stroke="#555" /></svg>
            </ZoomBox>
            <ToolButton aria-label="Zoom extents"><Glyph icon={ghIcons.focus} size={22} /></ToolButton>
            <ToolButton $narrow aria-label="Named views"><Caret /></ToolButton>
            <ToolButton aria-label="Preview"><Glyph icon={ghIcons.eye} size={22} /></ToolButton>
            <ToolButton $narrow aria-label="Preview options"><Caret /></ToolButton>
            <ToolButton aria-label="Sketch"><Glyph icon={ghIcons.sketch} size={22} /></ToolButton>
            <Spacer />
            <ToolButton aria-label="No preview"><Glyph icon={ghIcons.noPreview} size={22} /></ToolButton>
            <ToolButton aria-label="Wireframe preview"><Glyph icon={ghIcons.wire} size={22} /></ToolButton>
            <ToolButton $active aria-label="Shaded preview"><Glyph icon={ghIcons.shaded} size={22} /></ToolButton>
            <Divider $gap={5} />
            <ToolButton aria-label="Selected only"><Glyph icon={ghIcons.selected} size={22} /></ToolButton>
            <ToolButton aria-label="Document preview"><Glyph icon={ghIcons.quality} size={22} /></ToolButton>
            <Divider $gap={2} />
            <ToolButton aria-label="Mesh settings"><Glyph icon={ghIcons.display} size={20} /></ToolButton>
            <ToolButton $narrow aria-label="Mesh options"><Caret /></ToolButton>
        </GhToolbar>
        <GhCanvas />
        <GhStatus>
            <span>_</span>
            <Spacer />
            <span>0.9.0076</span>
            <svg width="12" height="12" fill="#999">
                <path d="M9 1h2v2h-2zM9 5h2v2h-2zM9 9h2v2h-2zM5 5h2v2h-2zM5 9h2v2h-2zM1 9h2v2h-2z" />
            </svg>
        </GhStatus>
    </Grasshopper>
)

const tasks = [
    ['Task view', <path key="a" d="M17.500 11.500h9v5h-9z" stroke="white" fill="none" />],
    ['Edge', <path key="a" d="M14 15a8 8 0 0 1 16 0h-5a3 3 0 0 0-6 0z" fill="#1778d8" />],
    ['Chrome', <circle key="a" cx="22" cy="17" r="9" fill="#d9503f" />],
    ['Explorer', <path key="a" d="M12 9h8l2 2h9v3H12z" fill="#f5cf62" />],
    ['Autodesk', <g key="a"><path d="M12 7h20v7H12z" fill="#e8e8e8" /><path d="M16 14l6-6 6 6z" fill="#b5121b" /></g>],
    ['Rhinoceros', <g key="a"><path d="M11 9h20v5H11z" fill="#161616" /><path d="M11 9h4l3 5h-7z" fill="#ddd" /></g>],
]

const App = () => (
    <>
        <GlobalStyle />
        <Screen>
            <Desktop>
                <RhinoWindow />
                <GrasshopperWindow />
                <PanelEdge>
                    <svg width="7" height="617" fill="none" stroke="#9aa1ae">
                        <path d="M0 46.500h7M0 60.500h5v-12M0 80.500h7M0 116.500h7M0 139.500h7M5.500 150v446M0 599.500h7" />
                        <path d="M0 22l2-2 2 2M0 35l2 3 2-3" stroke="#333" />
                        <circle cx="1" cy="72" r="4" />
                        <circle cx="1" cy="131" r="4" />
                    </svg>
                </PanelEdge>
            </Desktop>
            <Taskbar>
                <StartButton aria-label="Start">
                    <svg width="42" height="13"><path d="M14 12l6-1v3h-6zM21 11l8-1v4h-8z" fill="white" /></svg>
                </StartButton>
                <Search aria-label="Search">
                    <svg width="42" height="13"><circle cx="18" cy="17" r="8" fill="none" stroke="#ccc" strokeWidth="2" /></svg>
                </Search>
                {tasks.map(([name, art]) => (
                    <Task key={name} aria-label={name} $active={name === 'Rhinoceros'}>
                        <svg width="43" height="13">{art}</svg>
                    </Task>
                ))}
                <Spacer />
                <svg width="100" height="13" stroke="#ccc" fill="none">
                    <path d="M13 12l3-2 3 2M35 14v-1.500h14V14M63 14l3-3M78.500 14v-3.500h12V14" />
                </svg>
                <Tray><span>ENG</span><span>7:04 PM</span></Tray>
            </Taskbar>
        </Screen>
    </>
)

export default App
